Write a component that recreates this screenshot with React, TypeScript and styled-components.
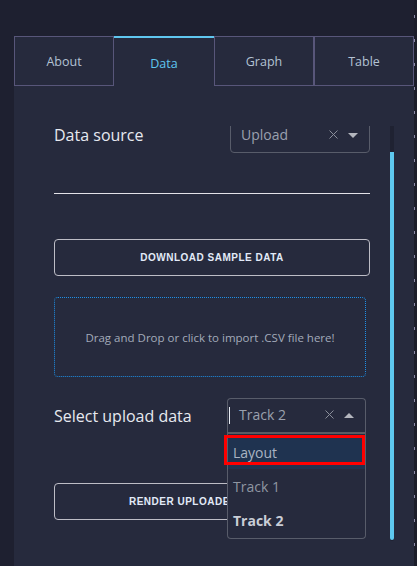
import React from 'react';
import styled, { createGlobalStyle, css } from 'styled-components';

const GlobalStyle = createGlobalStyle`
  html, body {
    margin: 0;
    padding: 0;
    background: #1e2030;
    font-family: "Open Sans", "Noto Sans", sans-serif;
  }
`;

const Page = styled.div`
  display: flex;
  height: 566px;
  padding: 36px 0 0 14px;
  box-sizing: border-box;
  overflow: hidden;
`;

const Panel = styled.div`
  width: 400px;
  display: flex;
  flex-direction: column;
`;

const EdgeStrip = styled.div`
  width: 3px;
  margin-top: -36px;
  background-color: #1b1d2a;
  background-image: repeating-linear-gradient(
    to bottom,
    transparent 0px,
    transparent 15px,
    #8c8aa6 15px,
    #8c8aa6 18px,
    transparent 18px,
    transparent 24px
  );
  background-size: 1px 24px;
  background-repeat: repeat-y;
`;

const TabBar = styled.div`
  display: grid;
  grid-template-columns: repeat(4, 100px);
  height: 50px;
`;

const Tab = styled.div<{ $active?: boolean }>`
  display: flex;
  align-items: center;
  justify-content: center;
  box-sizing: border-box;
  font-size: 12.5px;
  background: #262a3d;
  color: #b3c2d4;
  border: 1px solid #58567a;
  ${({ $active }) =>
    $active &&
    css`
      color: #5fc6ef;
      border: none;
      border-top: 2px solid #5fc6ef;
      padding-top: 2px;
    `}
`;

const Body = styled.div`
  flex: 1;
  display: flex;
  gap: 20px;
  padding: 40px 20px 0 40px;
  background: #262a3d;
`;

const Viewport = styled.div`
  width: 316px;
  height: 415px;
  overflow: hidden;
`;

const Content = styled.div`
  display: flex;
  flex-direction: column;
  margin-top: -9px;
`;

const ScrollTrack = styled.div`
  width: 4px;
  height: 415px;
  background: #1f2232;
  border-radius: 0 0 2px 2px;
  display: flex;
  flex-direction: column;
`;

const ScrollThumb = styled.div`
  margin-top: 26px;
  height: 388px;
  background: #5ec8ef;
  border-radius: 0 0 2px 2px;
`;

const FieldRow = styled.div<{ $width: number; $top?: number }>`
  display: flex;
  align-items: center;
  justify-content: space-between;
  width: ${({ $width }) => $width}px;
  height: 36px;
  margin-top: ${({ $top = 0 }) => $top}px;
`;

const Label = styled.span`
  font-size: 16px;
  line-height: 1;
  color: #e6e9f0;
`;

const SelectWrap = styled.div<{ $width: number }>`
  position: relative;
  width: ${({ $width }) => $width}px;
`;

const SelectBox = styled.div<{ $open?: boolean }>`
  display: flex;
  align-items: center;
  height: 36px;
  box-sizing: border-box;
  padding: 0 11px 0 10px;
  border: 1px solid #585c6a;
  border-radius: ${({ $open }) => ($open ? '4px 4px 0 0' : '4px')};
  ${({ $open }) =>
    $open &&
    css`
      padding-left: 1px;
      border-bottom: 2px solid #5a5c64;
    `}
`;

const Caret = styled.span`
  width: 1px;
  height: 17px;
  background: #e8ecf4;
  margin-right: 9px;
`;

const Value = styled.span`
  flex: 1;
  font-size: 14px;
  line-height: 1.2;
  color: #9aa0ae;
`;

const Clear = styled.svg`
  width: 9px;
  height: 9px;
  margin-right: 10px;
  margin-top: -2px;
`;

const Arrow = styled.svg`
  width: 10px;
  height: 5px;
`;

const Menu = styled.div`
  position: absolute;
  top: 100%;
  left: 0;
  right: 0;
  box-sizing: border-box;
  padding: 1px 0 1px;
  background: #262a3d;
  border: 1px solid #585c6a;
  border-top: none;
  border-radius: 0 0 4px 4px;
  z-index: 2;
`;

const Option = styled.div<{ $focused?: boolean; $selected?: boolean }>`
  position: relative;
  height: 34px;
  display: flex;
  align-items: center;
  padding-left: 5px;
  font-size: 14px;
  color: #8f96a2;
  ${({ $focused }) =>
    $focused &&
    css`
      background: #1f3350;
      color: #aab3c2;
      &::after {
        content: '';
        position: absolute;
        left: -4px;
        right: 0;
        top: 0;
        height: 30px;
        border: 3px solid #ff0000;
        box-sizing: border-box;
      }
    `}
  ${({ $selected }) =>
    $selected &&
    css`
      font-weight: 700;
      color: #c9cdd6;
    `}
`;

const Divider = styled.hr`
  width: 316px;
  margin: 40px 0 0;
  border: none;
  border-top: 1px solid #e2e2e8;
`;

const OutlineButton = styled.button<{ $width: number; $top: number }>`
  width: ${({ $width }) => $width}px;
  height: 37px;
  margin-top: ${({ $top }) => $top}px;
  background: transparent;
  border: 1px solid #bdbdc6;
  border-radius: 4px;
  color: #e2eaf8;
  font-family: "Liberation Sans", Arial, sans-serif;
  font-weight: 700;
  font-size: 10px;
  letter-spacing: 0.5px;
  text-transform: uppercase;
  cursor: pointer;
`;

const DropZone = styled.div`
  width: 312px;
  height: 80px;
  margin-top: 21px;
  box-sizing: border-box;
  display: flex;
  align-items: center;
  justify-content: center;
  border: 1px dotted #1e8fe6;
  border-radius: 4px;
  font-size: 11.5px;
  color: #a3aaba;
`;

const ClearIcon = () => (
  <Clear viewBox="0 0 9 9">
    <path d="M0.5 0.5 L8.5 8.5 M8.5 0.5 L0.5 8.5" stroke="#8a8e9a" strokeWidth="1" fill="none" />
  </Clear>
);

const ArrowIcon: React.FC<{ up?: boolean }> = ({ up }) => (
  <Arrow viewBox="0 0 10 5">
    <path d={up ? 'M0 5 L5 0 L10 5 Z' : 'M0 0 L10 0 L5 5 Z'} fill="#b4b6be" />
  </Arrow>
);

const tabs = ['About', 'Data', 'Graph', 'Table'];
const uploadOptions = ['Layout', 'Track 1', 'Track 2'];

const App: React.FC = () => {
  return (
    <>
      <GlobalStyle />
      <Page>
        <Panel>
          <TabBar>
            {tabs.map(t => (
              <Tab key={t} $active={t === 'Data'}>
                {t}
              </Tab>
            ))}
          </TabBar>
          <Body>
            <Viewport>
              <Content>
                <FieldRow $width={316}>
                  <Label>Data source</Label>
                  <SelectWrap $width={140}>
                    <SelectBox>
                      <Value>Upload</Value>
                      <ClearIcon />
                      <ArrowIcon />
                    </SelectBox>
                  </SelectWrap>
                </FieldRow>

                <Divider />

                <OutlineButton $width={316} $top={45}>Download sample data</OutlineButton>

                <DropZone>Drag and Drop or click to import .CSV file here!</DropZone>

                <FieldRow $width={312} $top={21}>
                  <Label>Select upload data</Label>
                  <SelectWrap $width={139}>
                    <SelectBox $open>
                      <Caret />
                      <Value>Track 2</Value>
                      <ClearIcon />
                      <ArrowIcon up />
                    </SelectBox>
                    <Menu>
                      {uploadOptions.map(o => (
                        <Option key={o} $focused={o === 'Layout'} $selected={o === 'Track 2'}>
                          {o}
                        </Option>
                      ))}
                    </Menu>
                  </SelectWrap>
                </FieldRow>

                <OutlineButton $width={290} $top={49}>Render uploaded data</OutlineButton>
              </Content>
            </Viewport>
            <ScrollTrack>
              <ScrollThumb />
            </ScrollTrack>
          </Body>
        </Panel>
        <EdgeStrip />
      </Page>
    </>
  );
};

export default App;
